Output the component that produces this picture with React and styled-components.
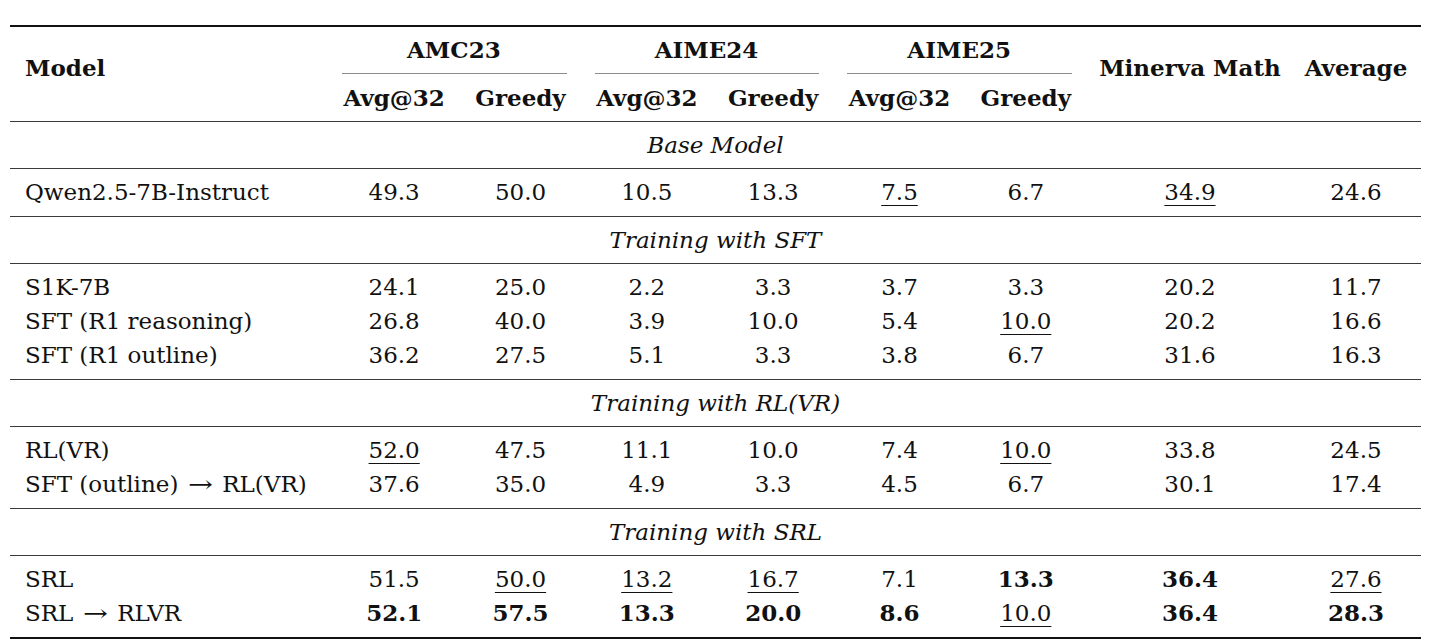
import React from "react";
import styled, { createGlobalStyle } from "styled-components";

const Global = createGlobalStyle`
  html, body { margin: 0; padding: 0; background: #ffffff; }
  body { font-family: "DejaVu Serif", "Liberation Serif", serif; color: #111; }
`;

const COLS = "321px repeat(6, 126.33px) 202px 130px";

const Page = styled.div`
  padding: 25px 10px 0 10px;
`;

const Table = styled.div`
  width: 1411px;
  border-top: 2px solid #111;
  border-bottom: 2px solid #111;
  font-size: 23px;
  line-height: 34px;
`;

const Header = styled.div`
  display: grid;
  grid-template-columns: ${COLS};
  grid-template-rows: 47px 47px;
  border-bottom: 1px solid #3a3a3a;
  font-weight: bold;
`;

const HeadCell = styled.div`
  grid-column: ${(p) => p.$col};
  grid-row: ${(p) => p.$row};
  display: flex;
  align-items: center;
  justify-content: ${(p) => (p.$left ? "flex-start" : "center")};
  padding-left: ${(p) => (p.$left ? "15px" : "0")};
  padding-bottom: ${(p) => (p.$tall ? "13px" : "0")};
  white-space: nowrap;
`;

const GroupCell = styled.div`
  grid-column: ${(p) => p.$col};
  grid-row: 1;
  display: flex;
  flex-direction: column;
  justify-content: flex-end;
`;

const GroupLabel = styled.div`
  flex: 1;
  display: flex;
  align-items: center;
  justify-content: center;
  padding-right: 7px;
  padding-bottom: 1px;
`;

const CMidRule = styled.div`
  height: 1px;
  margin: 0 17px 0 11px;
  background: #8c8c8c;
`;

const Section = styled.div`
  height: 46px;
  display: flex;
  align-items: center;
  justify-content: center;
  font-style: italic;
  border-bottom: 1px solid #3a3a3a;
`;

const Block = styled.div`
  padding: 6px 0 7px 0;
  border-bottom: ${(p) => (p.$last ? "none" : "1px solid #3a3a3a")};
`;

const Row = styled.div`
  display: grid;
  grid-template-columns: ${COLS};
  height: 34px;
  align-items: center;
`;

const ModelName = styled.div`
  padding-left: 15px;
  white-space: nowrap;
`;

const Arrow = styled.span`
  display: inline-block;
  transform: scaleX(1.3);
  margin: 0 5px;
`;

const Num = styled.div`
  text-align: center;
  font-weight: ${(p) => (p.$bold ? "bold" : "normal")};
  span {
    text-decoration: ${(p) => (p.$under ? "underline" : "none")};
    text-decoration-thickness: 1px;
    text-underline-offset: 5px;
  }
`;

const groups = [
  { name: "AMC23", col: "2 / span 2" },
  { name: "AIME24", col: "4 / span 2" },
  { name: "AIME25", col: "6 / span 2" },
];

const data = [
  {
    section: "Base Model",
    rows: [
      [["Qwen2.5-7B-Instruct"], ["49.3", "50.0", "10.5", "13.3", "u7.5", "6.7", "u34.9", "24.6"]],
    ],
  },
  {
    section: "Training with SFT",
    rows: [
      [["S1K-7B"], ["24.1", "25.0", "2.2", "3.3", "3.7", "3.3", "20.2", "11.7"]],
      [["SFT (R1 reasoning)"], ["26.8", "40.0", "3.9", "10.0", "5.4", "u10.0", "20.2", "16.6"]],
      [["SFT (R1 outline)"], ["36.2", "27.5", "5.1", "3.3", "3.8", "6.7", "31.6", "16.3"]],
    ],
  },
  {
    section: "Training with RL(VR)",
    rows: [
      [["RL(VR)"], ["u52.0", "47.5", "11.1", "10.0", "7.4", "u10.0", "33.8", "24.5"]],
      [["SFT (outline)", "RL(VR)"], ["37.6", "35.0", "4.9", "3.3", "4.5", "6.7", "30.1", "17.4"]],
    ],
  },
  {
    section: "Training with SRL",
    rows: [
      [["SRL"], ["51.5", "u50.0", "u13.2", "u16.7", "7.1", "b13.3", "b36.4", "u27.6"]],
      [["SRL", "RLVR"], ["b52.1", "b57.5", "b13.3", "b20.0", "b8.6", "u10.0", "b36.4", "b28.3"]],
    ],
  },
];

function Value({ v }) {
  const bold = v[0] === "b";
  const under = v[0] === "u";
  const text = bold || under ? v.slice(1) : v;
  return (
    <Num $bold={bold} $under={under}>
      <span>{text}</span>
    </Num>
  );
}

function Name({ parts }) {
  return (
    <ModelName>
      {parts.length === 1 ? (
        parts[0]
      ) : (
        <>
          {parts[0]} <Arrow>{"\u2192"}</Arrow> {parts[1]}
        </>
      )}
    </ModelName>
  );
}

export default function App() {
  return (
    <Page>
      <Global />
      <Table>
        <Header>
          <HeadCell $col="1" $row="1 / span 2" $left $tall>
            Model
          </HeadCell>
          {groups.map((g) => (
            <GroupCell key={g.name} $col={g.col}>
              <GroupLabel>{g.name}</GroupLabel>
              <CMidRule />
            </GroupCell>
          ))}
          {[2, 3, 4, 5, 6, 7].map((c) => (
            <HeadCell key={c} $col={String(c)} $row="2">
              {c % 2 === 0 ? "Avg@32" : "Greedy"}
            </HeadCell>
          ))}
          <HeadCell $col="8" $row="1 / span 2" $tall>
            Minerva Math
          </HeadCell>
          <HeadCell $col="9" $row="1 / span 2" $tall>
            Average
          </HeadCell>
        </Header>
        {data.map((blk, bi) => (
          <React.Fragment key={blk.section}>
            <Section>{blk.section}</Section>
            <Block $last={bi === data.length - 1}>
              {blk.rows.map(([name, vals]) => (
                <Row key={name.join()}>
                  <Name parts={name} />
                  {vals.map((v, i) => (
                    <Value key={i} v={v} />
                  ))}
                </Row>
              ))}
            </Block>
          </React.Fragment>
        ))}
      </Table>
    </Page>
  );
}
